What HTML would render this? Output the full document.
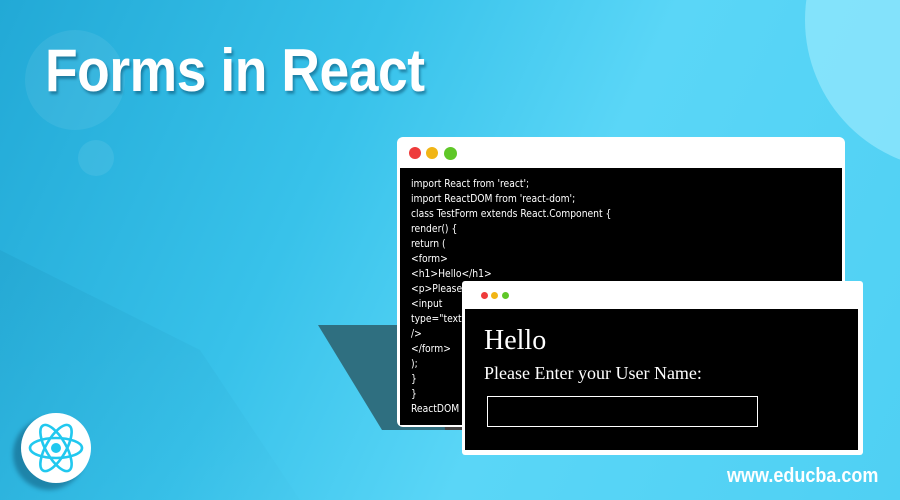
<!DOCTYPE html>
<html><head><style>
*{margin:0;padding:0;box-sizing:border-box}
body{width:900px;height:500px;overflow:hidden;position:relative;font-family:"Liberation Sans",sans-serif;
background:linear-gradient(115deg,#22a9d6 0%,#38c2ea 35%,#5ad6f7 60%,#4fd0f3 100%)}
.abs{position:absolute}
.title{left:45px;top:36px;font-size:60px;font-weight:bold;color:#fff;transform:scaleX(0.89);transform-origin:left top;text-shadow:2px 3px 3px rgba(0,60,90,.45);letter-spacing:-0.5px;white-space:nowrap}
.win{background:#fff;border-radius:6px}
.code{font-size:11px;color:#fff;line-height:15px;font-family:"DejaVu Sans Condensed","Liberation Sans",sans-serif;transform:scaleX(0.93);transform-origin:left top;white-space:nowrap}
.dot{position:absolute;border-radius:50%}
</style></head><body>
<div class="abs" style="left:805px;top:-130px;width:300px;height:300px;border-radius:50%;background:#8fe6fd;opacity:.8"></div>
<div class="abs" style="left:25px;top:30px;width:100px;height:100px;border-radius:50%;background:rgba(255,255,255,.07)"></div>
<div class="abs" style="left:78px;top:140px;width:36px;height:36px;border-radius:50%;background:rgba(255,255,255,.08)"></div>
<div class="abs" style="left:0;top:250px;width:500px;height:250px;background:linear-gradient(160deg,rgba(0,80,120,.08),rgba(0,80,120,.0));clip-path:polygon(0 0,40% 40%,60% 100%,0 100%)"></div>
<svg class="abs" style="left:0;top:0" width="900" height="500">
<polygon points="318,325 470,325 470,430 382,430" fill="#2f6f80"/>
<polygon points="440,380 470,380 470,430 445,430" fill="#444"/>
</svg>
<div class="title abs">Forms in React</div>

<div class="abs win" style="left:397px;top:137px;width:448px;height:290px">
<div class="dot" style="left:12px;top:10px;width:12px;height:12px;background:#ee3b3b"></div>
<div class="dot" style="left:29px;top:10px;width:12px;height:12px;background:#f1b515"></div>
<div class="dot" style="left:47px;top:10px;width:13px;height:13px;background:#5fc728"></div>
<div class="abs" style="left:3px;top:31px;width:442px;height:257px;background:#000;padding:8px 11px">
<div class="code">import React from 'react';<br>import ReactDOM from 'react-dom';<br>class TestForm extends React.Component {<br>render() {<br>return (<br>&lt;form&gt;<br>&lt;h1&gt;Hello&lt;/h1&gt;<br>&lt;p&gt;Please<br>&lt;input<br>type="text<br>/&gt;<br>&lt;/form&gt;<br>);<br>}<br>}<br>ReactDOM</div>
</div></div>

<div class="abs win" style="left:462px;top:281px;width:401px;height:174px;border-radius:3px">
<div class="dot" style="left:19px;top:11px;width:7px;height:7px;background:#ee3b3b"></div>
<div class="dot" style="left:29px;top:11px;width:7px;height:7px;background:#f1b515"></div>
<div class="dot" style="left:40px;top:11px;width:7px;height:7px;background:#5fc728"></div>
<div class="abs" style="left:3px;top:28px;width:393px;height:141px;background:#000;font-family:'Liberation Serif',serif;color:#fff">
<div class="abs" style="left:19px;top:16px;font-size:28px">Hello</div>
<div class="abs" style="left:19px;top:54px;font-size:18px">Please Enter your User Name:</div>
<div class="abs" style="left:22px;top:87px;width:271px;height:31px;border:1px solid #fff"></div>
</div></div>

<div class="abs" style="left:13px;top:418px;width:72px;height:72px;border-radius:50%;background:rgba(0,40,70,.35);filter:blur(2px)"></div>
<svg class="abs" style="left:21px;top:413px" width="70" height="70" viewBox="0 0 70 70">
<circle cx="35" cy="35" r="35" fill="#fff"/>
<g fill="none" stroke="#21c8ef" stroke-width="2.6">
<ellipse cx="35" cy="35" rx="26" ry="10"/>
<ellipse cx="35" cy="35" rx="26" ry="10" transform="rotate(60 35 35)"/>
<ellipse cx="35" cy="35" rx="26" ry="10" transform="rotate(-60 35 35)"/>
</g><circle cx="35" cy="35" r="5" fill="#21c8ef"/></svg>
<div class="abs" style="left:727px;top:465px;font-size:20px;font-weight:bold;color:#fff;transform:scaleX(0.9);transform-origin:left top;white-space:nowrap">www.educba.com</div>
</body></html>
